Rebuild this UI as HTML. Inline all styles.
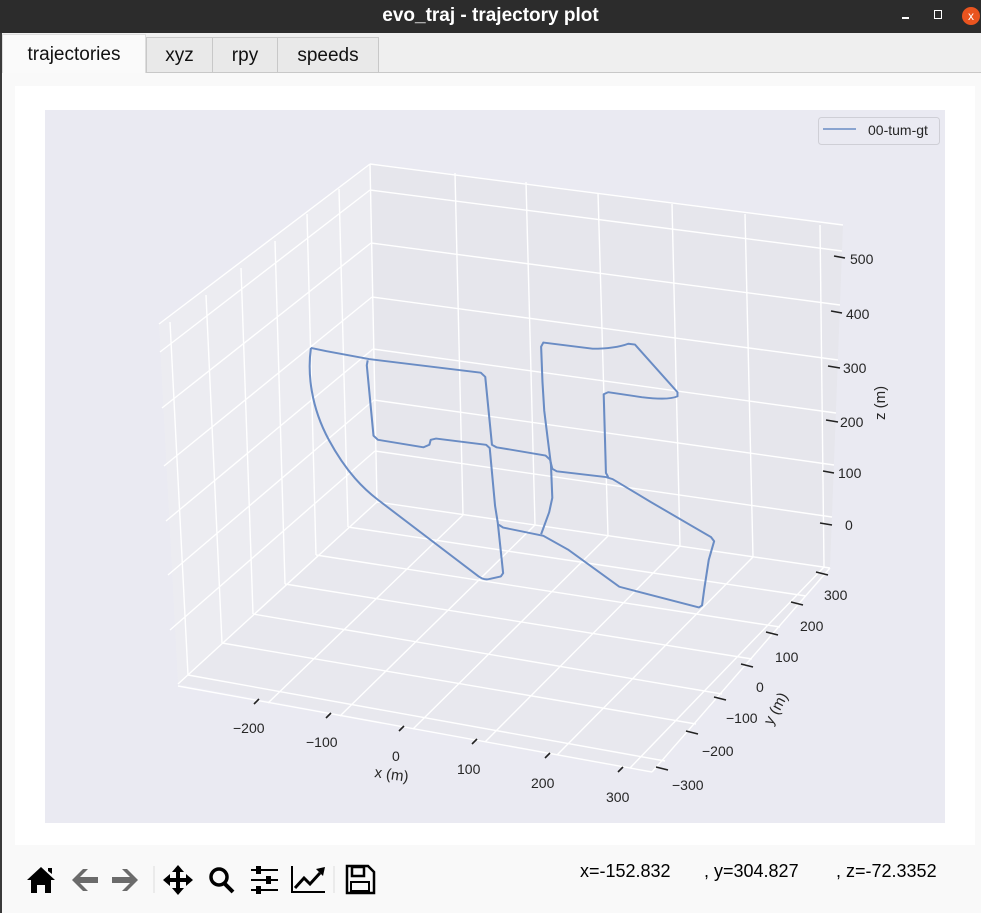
<!DOCTYPE html>
<html><head><meta charset="utf-8"><style>
html,body{margin:0;padding:0;width:981px;height:913px;overflow:hidden;background:#f9f9f9;font-family:"Liberation Sans",sans-serif}
.title{position:absolute;left:0;top:0;width:981px;height:33px;background:#2c2c2c;color:#fff;font-weight:bold;font-size:19px;text-align:center;line-height:32px}
.tabs{position:absolute;left:0;top:33px;width:981px;height:40px;background:#efefef}
.tab{position:absolute;top:37px;height:34px;background:#e9e9e9;border:1px solid #c8c8c8;border-bottom:none;font-size:19px;line-height:36px;text-align:center;color:#111}
.tab.act{top:34px;height:38px;background:#fafafa;border-color:#ddd;z-index:2;line-height:40px}
.tabline{position:absolute;left:0;top:72px;width:981px;height:1px;background:#c8c8c8}
.panel{position:absolute;left:15px;top:86px;width:960px;height:759px;background:#fff}
.c{position:absolute;top:861px;font-size:18px;color:#000;white-space:pre}
.lb{position:absolute;left:0;top:33px;width:2px;height:880px;background:#3a3a3a}
</style></head><body>
<div class="title">evo_traj - trajectory plot</div>
<div style="position:absolute;left:902px;top:17px;width:7px;height:1.5px;background:#fff"></div>
<div style="position:absolute;left:934px;top:10px;width:6px;height:7px;border:1.5px solid #fff"></div>
<div style="position:absolute;left:962px;top:7px;width:18px;height:18px;border-radius:9px;background:#e9541f;color:#fff;font-size:12px;line-height:18px;text-align:center">x</div>
<div class="tabs"></div>
<div class="tabline"></div>
<div class="tab act" style="left:2px;width:142px">trajectories</div>
<div class="tab" style="left:146px;width:65px">xyz</div>
<div class="tab" style="left:212px;width:64px">rpy</div>
<div class="tab" style="left:277px;width:100px">speeds</div>
<div class="lb"></div>
<div class="panel"></div>
<svg style="position:absolute;left:0;top:0" width="981" height="913" xmlns="http://www.w3.org/2000/svg" font-family="Liberation Sans, sans-serif">
<rect x="45" y="110" width="900" height="713" fill="#eaeaf2"/>
<polygon points="370,164 843,225 830,568 377,502" fill="#e6e6ec"/>
<polygon points="370,164 159,324 178,684 377,502" fill="#ececf1"/>
<polygon points="377,502 830,568 652,772 178,684" fill="#e8e8ee"/>
<g stroke="#fff" stroke-width="1.4" fill="none">
<line x1="370" y1="190" x2="842" y2="251"/><line x1="371" y1="243" x2="840" y2="305"/><line x1="372" y1="297" x2="838" y2="360"/><line x1="373" y1="349" x2="836" y2="413"/><line x1="374" y1="400" x2="834" y2="465"/><line x1="375" y1="451" x2="832" y2="517"/><line x1="377" y1="502" x2="830" y2="568"/>
<line x1="370" y1="164" x2="377" y2="502"/><line x1="455" y1="173" x2="463" y2="515"/><line x1="526" y1="182" x2="535" y2="525"/><line x1="598" y1="193" x2="608" y2="536"/><line x1="672" y1="204" x2="680" y2="546"/><line x1="745" y1="214" x2="753" y2="557"/><line x1="820" y1="225" x2="824" y2="567"/>
<line x1="370" y1="164" x2="843" y2="225"/>
<line x1="370" y1="164" x2="159" y2="324"/>
<line x1="339" y1="189" x2="348" y2="527"/><line x1="307" y1="214" x2="316" y2="555"/><line x1="275" y1="241" x2="285" y2="584"/><line x1="241" y1="268" x2="253" y2="614"/><line x1="206" y1="295" x2="222" y2="643"/><line x1="170" y1="322" x2="188" y2="675"/>
<line x1="370" y1="190" x2="160" y2="352"/><line x1="371" y1="243" x2="162" y2="408"/><line x1="372" y1="297" x2="164" y2="466"/><line x1="373" y1="349" x2="166" y2="521"/><line x1="374" y1="400" x2="168" y2="575"/><line x1="375" y1="451" x2="170" y2="630"/><line x1="377" y1="502" x2="178" y2="684"/>
<line x1="348" y1="527" x2="806" y2="596"/><line x1="316" y1="555" x2="780" y2="627"/><line x1="285" y1="584" x2="752" y2="659"/><line x1="253" y1="614" x2="722" y2="694"/><line x1="222" y1="643" x2="696" y2="724"/><line x1="188" y1="675" x2="665" y2="761"/><line x1="178" y1="686" x2="652" y2="772"/>
<line x1="463" y1="515" x2="268" y2="703"/><line x1="535" y1="525" x2="340" y2="716"/><line x1="608" y1="536" x2="413" y2="729"/><line x1="680" y1="546" x2="485" y2="742"/><line x1="753" y1="557" x2="557" y2="755"/><line x1="824" y1="567" x2="630" y2="768"/>
<line x1="830" y1="568" x2="652" y2="772"/>
</g>
<g transform="translate(150,150) scale(0.447,0.414)" fill="none" stroke="#6a8cc4" stroke-width="4.6" stroke-linejoin="round">
<path d="M360,478 L395,486 L490,505 L740,538 L750,548 L765,712 L775,718 L885,738 L895,748 L900,770 L910,776 L1020,790 L1035,795 L1120,850 L1215,910 L1255,935 L1262,945 L1250,990 L1240,1060 L1235,1100 L1228,1105 L1050,1055 L935,965 L880,932 L790,912 L780,905"/>
<path d="M360,478 C352,540 360,620 400,700 C440,780 480,820 510,845 L735,1030 Q748,1040 760,1036 L785,1030 L790,1022 L778,900 L772,860 L760,720 L752,712 L640,697 L628,700 L625,712 L612,718 L510,700 L500,690 L485,520 L487,508"/>
<path d="M875,928 L893,875 L900,840 L897,760 L890,700 L882,630 L878,560 L875,475 L880,465 L990,480 Q1040,480 1070,468 L1085,470 L1180,585 L1180,595 Q1160,605 1100,597 L1025,585 L1015,590 L1020,780 L1025,790"/>
</g>
<g stroke="#222" stroke-width="1.6">
<line x1="834" y1="256" x2="845" y2="258"/><line x1="831" y1="311" x2="842" y2="313"/><line x1="828" y1="366" x2="840" y2="368"/><line x1="826" y1="420" x2="838" y2="422"/><line x1="823" y1="471" x2="834" y2="473"/><line x1="820" y1="523" x2="832" y2="525"/>
<line x1="816" y1="572" x2="828" y2="575"/><line x1="791" y1="602" x2="803" y2="605"/><line x1="766" y1="632" x2="778" y2="635"/><line x1="741" y1="664" x2="753" y2="667"/><line x1="714" y1="697" x2="726" y2="700"/><line x1="686" y1="731" x2="698" y2="734"/><line x1="656" y1="767" x2="668" y2="770"/>
<line x1="254" y1="704" x2="259" y2="699"/><line x1="326" y1="718" x2="331" y2="713"/><line x1="399" y1="731" x2="404" y2="726"/><line x1="472" y1="744" x2="477" y2="739"/><line x1="545" y1="758" x2="550" y2="753"/><line x1="618" y1="772" x2="623" y2="767"/>
</g>
<g font-size="14" fill="#262626">
<text x="850" y="264">500</text><text x="846" y="319">400</text><text x="843" y="373">300</text><text x="840" y="427">200</text><text x="838" y="478">100</text><text x="845" y="530">0</text>
<text x="824" y="600">300</text><text x="800" y="631">200</text><text x="775" y="662">100</text><text x="756" y="692">0</text><text x="726" y="723">−100</text><text x="702" y="756">−200</text><text x="672" y="790">−300</text>
<text x="233" y="733">−200</text><text x="306" y="747">−100</text><text x="392" y="761">0</text><text x="457" y="774">100</text><text x="531" y="788">200</text><text x="606" y="802">300</text>
<text transform="translate(374,777) rotate(8)" font-size="15">x (m)</text>
<text transform="translate(885,420) rotate(-90)" font-size="15">z (m)</text>
<text transform="translate(772,726) rotate(-62)" font-size="15">y (m)</text>
</g>
<rect x="818.5" y="117.5" width="121" height="27" rx="3" fill="#eaeaf2" stroke="#cfcfd6"/>
<line x1="823" y1="129" x2="856" y2="129" stroke="#6a8cc4" stroke-width="1.5"/>
<text x="868" y="135" font-size="14" fill="#262626">00-tum-gt</text>
<path d="M27,880 L41,867 L55,880 L51,880 L51,893 L45,893 L45,885 L37,885 L37,893 L31,893 L31,880 Z M48,868 h4 v6 l-4,-3z" fill="#000"/>
<g fill="#6b6b6b">
<path d="M72,880 L83,869 L88,869 L80,877 L98,877 L98,883 L80,883 L88,891 L83,891 Z"/>
<path d="M138,880 L127,869 L122,869 L130,877 L112,877 L112,883 L130,883 L122,891 L127,891 Z"/>
</g>
<line x1="154" y1="866" x2="154" y2="893" stroke="#ddd"/>
<line x1="334" y1="866" x2="334" y2="893" stroke="#ddd"/>
<path d="M178,865 L184,872 L180,872 L180,878 L186,878 L186,874 L193,880 L186,886 L186,882 L180,882 L180,888 L184,888 L178,895 L172,888 L176,888 L176,882 L170,882 L170,886 L163,880 L170,874 L170,878 L176,878 L176,872 L172,872 Z" fill="#000"/>
<circle cx="219" cy="877" r="8" fill="none" stroke="#000" stroke-width="3.5"/>
<line x1="224" y1="883" x2="233" y2="892" stroke="#000" stroke-width="4"/>
<g stroke="#000" stroke-width="2"><line x1="251" y1="870" x2="278" y2="870"/><line x1="251" y1="880" x2="278" y2="880"/><line x1="251" y1="890" x2="278" y2="890"/></g>
<g fill="#000"><rect x="256" y="866" width="5" height="8"/><rect x="266" y="876" width="5" height="8"/><rect x="256" y="886" width="5" height="8"/></g>
<path d="M292,866 V892 H325" fill="none" stroke="#000" stroke-width="2"/>
<path d="M295,888 L304,878 L310,884 L320,873" fill="none" stroke="#000" stroke-width="3"/>
<path d="M316,869 L325,867 L323,876 Z" fill="#000"/>
<path d="M347,866 H368 L374,872 V893 H347 Z" fill="none" stroke="#000" stroke-width="2.5"/>
<rect x="352" y="867" width="12" height="9" fill="none" stroke="#000" stroke-width="2.5"/>
<rect x="351" y="882" width="18" height="9" fill="none" stroke="#000" stroke-width="2"/>
</svg>
<div class="c" style="left:580px">x=-152.832</div>
<div class="c" style="left:704px">, y=304.827</div>
<div class="c" style="left:836px">, z=-72.3352</div>
</body></html>
